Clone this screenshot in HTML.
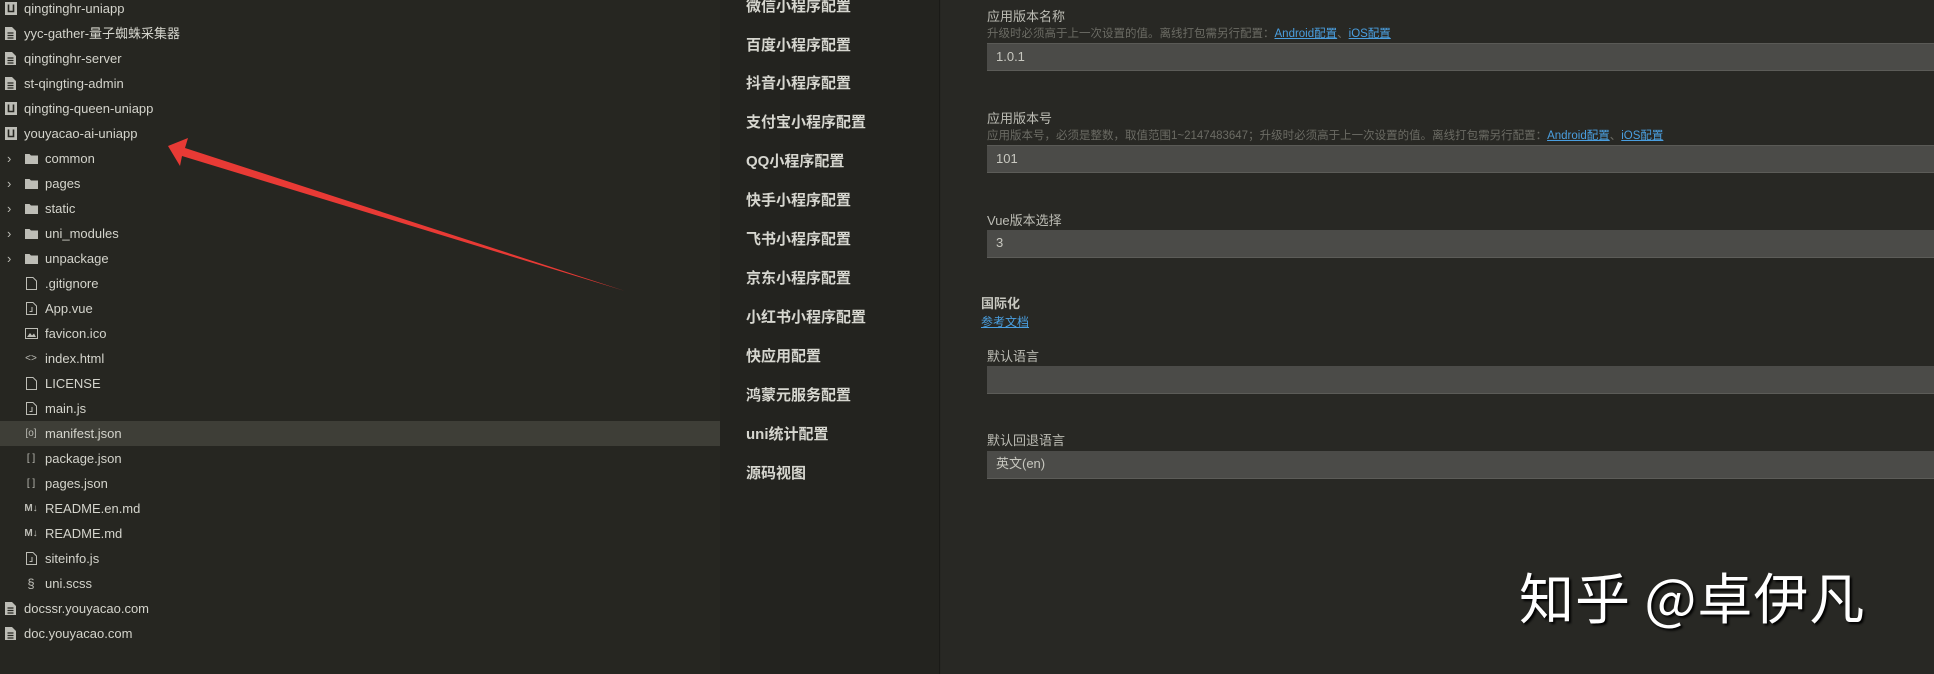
<!DOCTYPE html>
<html><head><meta charset="utf-8"><style>
*{margin:0;padding:0;box-sizing:border-box}
body{width:1934px;height:674px;overflow:hidden;background:#262622;font-family:"Liberation Sans","Noto Sans CJK SC",sans-serif;position:relative}
.left{position:absolute;left:0;top:0;width:720px;height:674px;background:#262621}
.row{position:absolute;left:0;width:720px;height:25px;line-height:25px;font-size:13px;color:#d4d4cc;white-space:nowrap}
.row.sel{background:#3e3e37}
.ic{position:absolute;top:6px;width:13px;height:13px}
.ch{position:absolute;top:0;left:7px;color:#bdbdb6;font-size:13px}
.ti{position:absolute;top:0;left:24px;width:14px;text-align:center;color:#bdbdb6;font-size:10px}
.mid{position:absolute;left:720px;top:0;width:220px;height:674px;background:#23231f;border-right:1px solid #1a1a17}
.mi{position:absolute;left:26px;font-size:15px;font-weight:bold;color:#d6d6cf;line-height:20px}
.right{position:absolute;left:941px;top:0;right:0;height:674px;background:#282824}
.lab{position:absolute;left:46px;font-size:13px;color:#bdbdb5;line-height:16px}
.hint{position:absolute;left:46px;font-size:11.5px;color:#6b6b64;line-height:14px;white-space:nowrap}
.hint a{color:#4a9fe0;text-decoration:underline}
.inp{position:absolute;left:46px;right:0;height:28px;background:#4b4b48;border-top:1px solid #5a5a56;border-bottom:1px solid #5c5c58;color:#c8c8c0;font-size:13px;line-height:26px;padding-left:9px}
.wm{position:absolute;left:1519px;top:555px;font-size:55px;color:#fff;font-family:"Noto Sans CJK SC",sans-serif;text-shadow:2px 2px 2px #000;letter-spacing:1px;white-space:nowrap}
</style></head><body>
<svg width="0" height="0" style="position:absolute">
<defs>
<symbol id="u" viewBox="0 0 13 13"><rect x="0" y="0" width="12" height="13" fill="#bdbdb6"/><path d="M3.5 2.5V9.5H8.5V2.5" stroke="#262621" stroke-width="1.6" fill="none"/></symbol>
<symbol id="d" viewBox="0 0 13 13"><path d="M0 0H7L11 4V13H0Z" fill="#bdbdb6"/><path d="M2.5 6H8.5M2.5 8.5H8.5M2.5 11H8.5" stroke="#262621" stroke-width="1.2"/></symbol>
<symbol id="f" viewBox="0 0 13 13"><path d="M0 2H4.5L6 3.5H13V12H0Z" fill="#bdbdb6"/></symbol>
<symbol id="p" viewBox="0 0 13 13"><path d="M1.5 0.5H8L11.5 4V12.5H1.5Z" fill="none" stroke="#bdbdb6" stroke-width="1"/></symbol>
<symbol id="j" viewBox="0 0 13 13"><path d="M1.5 0.5H8L11.5 4V12.5H1.5Z" fill="none" stroke="#bdbdb6" stroke-width="1"/><path d="M7 5V9.5H4.5" stroke="#bdbdb6" fill="none"/></symbol>
<symbol id="i" viewBox="0 0 13 13"><rect x="0.5" y="1.5" width="12" height="10" fill="none" stroke="#bdbdb6"/><path d="M2 10L5 6L7 8.5L9 6.5L11 10Z" fill="#bdbdb6"/></symbol>
</defs></svg>
<div class="left">
<div class="row" style="top:-4px"><svg class="ic" style="left:5px"><use href="#u"/></svg><span style="position:absolute;left:24px">qingtinghr-uniapp</span></div>
<div class="row" style="top:21px"><svg class="ic" style="left:5px"><use href="#d"/></svg><span style="position:absolute;left:24px">yyc-gather-量子蜘蛛采集器</span></div>
<div class="row" style="top:46px"><svg class="ic" style="left:5px"><use href="#d"/></svg><span style="position:absolute;left:24px">qingtinghr-server</span></div>
<div class="row" style="top:71px"><svg class="ic" style="left:5px"><use href="#d"/></svg><span style="position:absolute;left:24px">st-qingting-admin</span></div>
<div class="row" style="top:96px"><svg class="ic" style="left:5px"><use href="#u"/></svg><span style="position:absolute;left:24px">qingting-queen-uniapp</span></div>
<div class="row" style="top:121px"><svg class="ic" style="left:5px"><use href="#u"/></svg><span style="position:absolute;left:24px">youyacao-ai-uniapp</span></div>
<div class="row" style="top:146px"><span class="ch">›</span><svg class="ic" style="left:25px"><use href="#f"/></svg><span style="position:absolute;left:45px">common</span></div>
<div class="row" style="top:171px"><span class="ch">›</span><svg class="ic" style="left:25px"><use href="#f"/></svg><span style="position:absolute;left:45px">pages</span></div>
<div class="row" style="top:196px"><span class="ch">›</span><svg class="ic" style="left:25px"><use href="#f"/></svg><span style="position:absolute;left:45px">static</span></div>
<div class="row" style="top:221px"><span class="ch">›</span><svg class="ic" style="left:25px"><use href="#f"/></svg><span style="position:absolute;left:45px">uni_modules</span></div>
<div class="row" style="top:246px"><span class="ch">›</span><svg class="ic" style="left:25px"><use href="#f"/></svg><span style="position:absolute;left:45px">unpackage</span></div>
<div class="row" style="top:271px"><svg class="ic" style="left:25px"><use href="#p"/></svg><span style="position:absolute;left:45px">.gitignore</span></div>
<div class="row" style="top:296px"><svg class="ic" style="left:25px"><use href="#j"/></svg><span style="position:absolute;left:45px">App.vue</span></div>
<div class="row" style="top:321px"><svg class="ic" style="left:25px"><use href="#i"/></svg><span style="position:absolute;left:45px">favicon.ico</span></div>
<div class="row" style="top:346px"><span class="ti">&lt;&gt;</span><span style="position:absolute;left:45px">index.html</span></div>
<div class="row" style="top:371px"><svg class="ic" style="left:25px"><use href="#p"/></svg><span style="position:absolute;left:45px">LICENSE</span></div>
<div class="row" style="top:396px"><svg class="ic" style="left:25px"><use href="#j"/></svg><span style="position:absolute;left:45px">main.js</span></div>
<div class="row sel" style="top:421px"><span class="ti">[o]</span><span style="position:absolute;left:45px">manifest.json</span></div>
<div class="row" style="top:446px"><span class="ti">[ ]</span><span style="position:absolute;left:45px">package.json</span></div>
<div class="row" style="top:471px"><span class="ti">[ ]</span><span style="position:absolute;left:45px">pages.json</span></div>
<div class="row" style="top:496px"><span class="ti" style="font-weight:bold">M↓</span><span style="position:absolute;left:45px">README.en.md</span></div>
<div class="row" style="top:521px"><span class="ti" style="font-weight:bold">M↓</span><span style="position:absolute;left:45px">README.md</span></div>
<div class="row" style="top:546px"><svg class="ic" style="left:25px"><use href="#j"/></svg><span style="position:absolute;left:45px">siteinfo.js</span></div>
<div class="row" style="top:571px"><span class="ti" style="font-size:13px">§</span><span style="position:absolute;left:45px">uni.scss</span></div>
<div class="row" style="top:596px"><svg class="ic" style="left:5px"><use href="#d"/></svg><span style="position:absolute;left:24px">docssr.youyacao.com</span></div>
<div class="row" style="top:621px"><svg class="ic" style="left:5px"><use href="#d"/></svg><span style="position:absolute;left:24px">doc.youyacao.com</span></div>
<svg style="position:absolute;left:0;top:0" width="720" height="674"><path d="M168 146 L188 138 L185 148 L625 291 L182 156 L180 166 Z" fill="#e83a35"/></svg>
</div>
<div class="mid">
<div class="mi" style="top:-3px">微信小程序配置</div>
<div class="mi" style="top:36px">百度小程序配置</div>
<div class="mi" style="top:74px">抖音小程序配置</div>
<div class="mi" style="top:113px">支付宝小程序配置</div>
<div class="mi" style="top:152px">QQ小程序配置</div>
<div class="mi" style="top:191px">快手小程序配置</div>
<div class="mi" style="top:230px">飞书小程序配置</div>
<div class="mi" style="top:269px">京东小程序配置</div>
<div class="mi" style="top:308px">小红书小程序配置</div>
<div class="mi" style="top:347px">快应用配置</div>
<div class="mi" style="top:386px">鸿蒙元服务配置</div>
<div class="mi" style="top:425px">uni统计配置</div>
<div class="mi" style="top:464px">源码视图</div>
</div>
<div class="right">
<div class="lab" style="top:9px">应用版本名称</div>
<div class="hint" style="top:27px">升级时必须高于上一次设置的值。离线打包需另行配置：<a>Android配置</a>、<a>iOS配置</a></div>
<div class="inp" style="top:43px">1.0.1</div>
<div class="lab" style="top:111px">应用版本号</div>
<div class="hint" style="top:129px">应用版本号，必须是整数，取值范围1~2147483647；升级时必须高于上一次设置的值。离线打包需另行配置：<a>Android配置</a>、<a>iOS配置</a></div>
<div class="inp" style="top:145px">101</div>
<div class="lab" style="top:213px">Vue版本选择</div>
<div class="inp" style="top:230px;border-top:none">3</div>
<div class="lab" style="top:296px;left:40px;font-weight:bold;color:#c8c8c0">国际化</div>
<div class="hint" style="top:315px;left:40px;font-size:12px"><a>参考文档</a></div>
<div class="lab" style="top:349px">默认语言</div>
<div class="inp" style="top:366px;border-top:none"></div>
<div class="lab" style="top:433px">默认回退语言</div>
<div class="inp" style="top:451px;border-top:none">英文(en)</div>
</div>
<div class="wm">知乎 @卓伊凡</div>
</body></html>
